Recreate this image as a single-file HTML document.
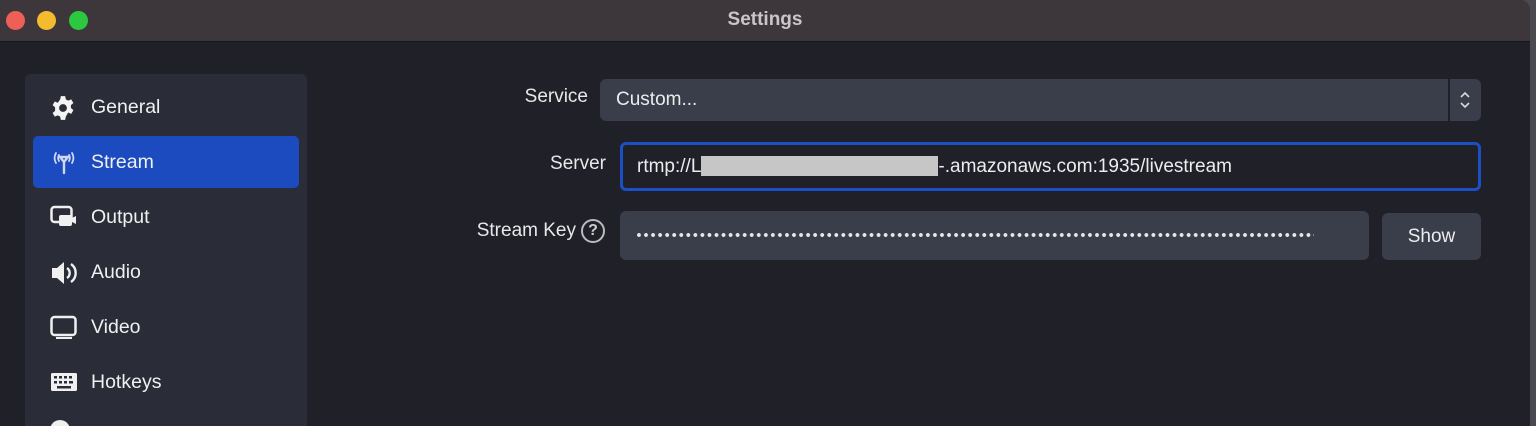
<!DOCTYPE html>
<html><head><meta charset="utf-8"><style>
*{margin:0;padding:0;box-sizing:border-box}
body{width:1536px;height:426px;overflow:hidden;background:#4a4a50;font-family:"Liberation Sans",sans-serif;position:relative}
.win{position:absolute;left:0;top:0;width:1530px;height:426px;background:#1f2028;border-top-right-radius:10px;overflow:hidden}
.title{position:absolute;left:0;top:0;width:100%;height:42px;background:#3d373c;border-bottom:1px solid #15161b;color:#c9c5c8;font-weight:bold;font-size:19px;text-align:center;line-height:40px}
.dot{position:absolute;top:11px;width:19px;height:19px;border-radius:50%}
.side{position:absolute;left:25px;top:74px;width:282px;height:360px;background:#2a2c37;border-radius:6px}
.item{position:absolute;left:8px;width:266px;height:52px;color:#f0f0f0;font-size:19.5px;line-height:52px;padding-left:58px}
.item.sel{background:#1b4bbf;border-radius:5px}
.item svg{position:absolute;left:17px;top:14px}
.lbl{position:absolute;color:#e8e8e8;font-size:19px;text-align:right}
.box{position:absolute;background:#3a3d4a;border-radius:6px;color:#ececec;font-size:19px}
</style></head><body>
<div class="win">
<div class="title">Settings
<div class="dot" style="left:6px;background:#ed5f57"></div>
<div class="dot" style="left:37px;background:#f5bb2f"></div>
<div class="dot" style="left:69px;background:#2bc840"></div>
</div>
<div class="side">
<div class="item" style="top:7px"><svg width="26" height="26" viewBox="0 0 24 24"><path fill="#f4f4f4" d="M10 1h4l.6 3 2.2 1.2 2.8-1.2 2 3.4-2.3 2 0 2.6 2.3 2-2 3.4-2.8-1.2L14.6 20 14 23h-4l-.6-3-2.2-1.2-2.8 1.2-2-3.4 2.3-2V11.4L2.4 9.4l2-3.4 2.8 1.2L9.4 4z"/><circle cx="12" cy="12" r="3.6" fill="#2a2c37"/></svg>General</div>
<div class="item sel" style="top:62px"><svg width="28" height="26" viewBox="0 0 28 26"><g fill="none" stroke="#cfd8f0" stroke-width="1.8" stroke-linecap="round"><path d="M6 3a10 10 0 0 0 0 10M22 3a10 10 0 0 1 0 10M9 5a6 6 0 0 0 0 6M19 5a6 6 0 0 1 0 6"/><path d="M10 7h8l-4 5zM14 11v12" stroke-width="2.4"/></g></svg>Stream</div>
<div class="item" style="top:117px"><svg width="28" height="26" viewBox="0 0 28 26"><rect x="1.5" y="2" width="20" height="15" rx="3" fill="none" stroke="#f0f0f0" stroke-width="2.5"/><rect x="9" y="10" width="13" height="11" rx="2" fill="#f0f0f0"/><path d="M22 13l4-2v8l-4-2z" fill="#f0f0f0"/></svg>Output</div>
<div class="item" style="top:172px"><svg width="28" height="26" viewBox="0 0 28 26"><path d="M2 8h5l7-6v22l-7-6H2z" fill="#f0f0f0"/><path d="M17 8a6 6 0 0 1 0 10M21 4a11 11 0 0 1 0 18" fill="none" stroke="#f0f0f0" stroke-width="2.4"/></svg>Audio</div>
<div class="item" style="top:227px"><svg width="28" height="26" viewBox="0 0 28 26"><rect x="1.5" y="2" width="24" height="18" rx="3" fill="none" stroke="#f0f0f0" stroke-width="2.5"/><path d="M6 23h16" stroke="#f0f0f0" stroke-width="2"/></svg>Video</div>
<div class="item" style="top:282px"><svg width="28" height="26" viewBox="0 0 28 26"><rect x="1" y="3" width="26" height="18" rx="1.5" fill="#f0f0f0"/><g fill="#2a2c37"><rect x="4" y="6" width="3" height="2.5"/><rect x="9" y="6" width="3" height="2.5"/><rect x="14" y="6" width="3" height="2.5"/><rect x="19" y="6" width="3" height="2.5"/><rect x="4" y="11" width="3" height="2.5"/><rect x="9" y="11" width="3" height="2.5"/><rect x="14" y="11" width="3" height="2.5"/><rect x="19" y="11" width="4" height="2.5"/><rect x="7" y="16" width="14" height="2.5"/></g></svg>Hotkeys</div>
<div style="position:absolute;left:25px;top:346px;width:20px;height:20px;border-radius:50%;background:#f0f0f0"></div>
</div>
<div class="lbl" style="left:480px;width:108px;top:86px">Service</div>
<div class="box" style="left:600px;top:79px;width:881px;height:42px;line-height:42px;padding-left:16px">Custom...
<div style="position:absolute;left:848px;top:0;width:2px;height:42px;background:#1f2028"></div>
<svg style="position:absolute;left:858px;top:10px" width="14" height="22" viewBox="0 0 14 22"><path d="M3 8l4-4 4 4M3 14l4 4 4-4" fill="none" stroke="#d8d8d8" stroke-width="1.6"/></svg></div>
<div class="lbl" style="left:500px;width:106px;top:153px">Server</div>
<div class="box" style="left:620px;top:142px;width:861px;height:49px;background:#1f2028;border:3px solid #1d4fc4;line-height:43px;padding-left:14px">rtmp://L<span style="display:inline-block;width:237px;height:20px;background:#c6c6c6;vertical-align:-4px"></span>-.amazonaws.com:1935/livestream</div>
<div class="lbl" style="left:440px;width:136px;top:220px">Stream Key</div>
<div style="position:absolute;left:581px;top:219px;width:24px;height:24px;border-radius:50%;border:2px solid #bbb;color:#ccc;font-size:16px;font-weight:bold;text-align:center;line-height:20px">?</div>
<div class="box" style="left:620px;top:211px;width:749px;height:49px"><div style="position:absolute;left:17px;top:233px;margin-top:-211px;width:677px;height:4px;background:radial-gradient(circle at 2px 2px,#e6e6e6 1.8px,transparent 2.1px) 0 0/7.05px 4px repeat-x"></div></div>
<div class="box" style="left:1382px;top:213px;width:99px;height:47px;line-height:47px;text-align:center">Show</div>
</div>
</body></html>
